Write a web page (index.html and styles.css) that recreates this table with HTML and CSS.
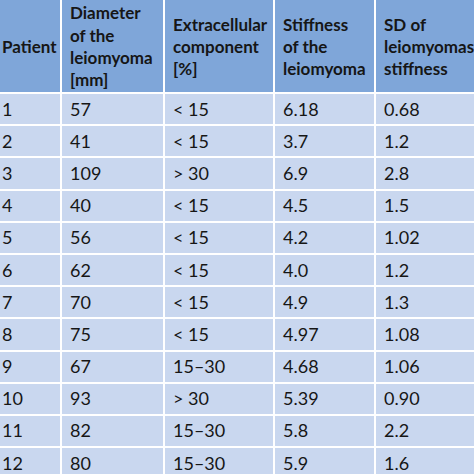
FILE: index.html
```html
<!DOCTYPE html>
<html lang="en">
<head>
<meta charset="utf-8">
<title>Leiomyoma stiffness table</title>
<link rel="stylesheet" href="styles.css">
</head>
<body>
<div class="frame">
<table class="data">
  <colgroup>
    <col class="c1"><col class="c2"><col class="c3"><col class="c4"><col class="c5">
  </colgroup>
  <thead>
    <tr>
      <th>Patient</th>
      <th>Diameter<br>of the<br>leiomyoma<br>[mm]</th>
      <th>Extracellular<br>component<br>[%]</th>
      <th>Stiffness<br>of the<br>leiomyoma</th>
      <th>SD of<br>leiomyomas<br>stiffness</th>
    </tr>
  </thead>
  <tbody>
    <tr><td>1</td><td>57</td><td>&lt; 15</td><td>6.18</td><td>0.68</td></tr>
    <tr><td>2</td><td>41</td><td>&lt; 15</td><td>3.7</td><td>1.2</td></tr>
    <tr><td>3</td><td>109</td><td>&gt; 30</td><td>6.9</td><td>2.8</td></tr>
    <tr><td>4</td><td>40</td><td>&lt; 15</td><td>4.5</td><td>1.5</td></tr>
    <tr><td>5</td><td>56</td><td>&lt; 15</td><td>4.2</td><td>1.02</td></tr>
    <tr><td>6</td><td>62</td><td>&lt; 15</td><td>4.0</td><td>1.2</td></tr>
    <tr><td>7</td><td>70</td><td>&lt; 15</td><td>4.9</td><td>1.3</td></tr>
    <tr><td>8</td><td>75</td><td>&lt; 15</td><td>4.97</td><td>1.08</td></tr>
    <tr><td>9</td><td>67</td><td>15–30</td><td>4.68</td><td>1.06</td></tr>
    <tr><td>10</td><td>93</td><td>&gt; 30</td><td>5.39</td><td>0.90</td></tr>
    <tr><td>11</td><td>82</td><td>15–30</td><td>5.8</td><td>2.2</td></tr>
    <tr><td>12</td><td>80</td><td>15–30</td><td>5.9</td><td>1.6</td></tr>
  </tbody>
</table>
</div>
</body>
</html>
```
FILE: styles.css
```css
html, body {
  margin: 0;
  padding: 0;
  background: #ffffff;
}
.frame {
  width: 474px;
  height: 474px;
  overflow: hidden;
}
.data {
  border-collapse: separate;
  border-spacing: 2px;
  background: #ffffff;
  table-layout: fixed;
  width: 496px;
  margin-left: -8px;
  margin-top: -2px;
  font-family: Lato, "Open Sans", sans-serif;
  color: #161616;
}
.c1 { width: 66px; }
.c2 { width: 101px; }
.c3 { width: 108px; }
.c4 { width: 99px; }
.c5 { width: 110px; }
.data th {
  background: #7fa6d9;
  font-weight: 700;
  font-size: 17px;
  line-height: 22.3px;
  text-align: left;
  vertical-align: middle;
  white-space: nowrap;
  height: 92px;
  padding: 2px 0 0 8px;
  box-sizing: border-box;
}
.data td {
  background: #c9d7ef;
  font-size: 18px;
  line-height: 20px;
  height: 30.2px;
  padding: 0 0 1px 8px;
  box-sizing: border-box;
  vertical-align: middle;
  white-space: nowrap;
}
```
